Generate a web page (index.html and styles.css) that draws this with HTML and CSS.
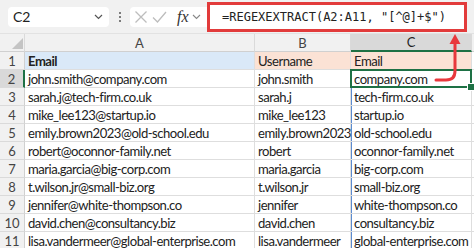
FILE: index.html
```html
<!DOCTYPE html>
<html>
<head>
<meta charset="utf-8">
<link rel="stylesheet" href="styles.css">
</head>
<body>
<div class="app">
  <div class="toolbar">
    <div class="namebox">
      <span class="ref">C2</span>
      <svg class="chev" width="9" height="6" viewBox="0 0 9 6"><path d="M1 1 L4.5 4.5 L8 1" fill="none" stroke="#555" stroke-width="1.2"/></svg>
    </div>
    <div class="dots"><span></span><span></span><span></span></div>
    <div class="fnbox">
      <svg width="14" height="14" viewBox="0 0 14 14"><path d="M1.5 1.5 L12.5 12.5 M12.5 1.5 L1.5 12.5" stroke="#bdbdbd" stroke-width="1.3" fill="none"/></svg>
      <svg width="15" height="14" viewBox="0 0 15 14"><path d="M1 7.5 L5.5 12 L14 2" stroke="#bdbdbd" stroke-width="1.3" fill="none"/></svg>
      <span class="fx">fx</span>
      <svg width="9" height="6" viewBox="0 0 9 6"><path d="M1 1 L4.5 4.5 L8 1" fill="none" stroke="#888" stroke-width="1.1"/></svg>
    </div>
    <div class="formula"><span class="ftext">=REGEXEXTRACT(A2:A11, "[^@]+$")</span></div>
  </div>
  <div class="sheet">
    <div class="corner"><svg width="25" height="18" viewBox="0 0 25 18"><polygon points="12,15 23,15 23,4" fill="#c4c4c4"/></svg></div>
    <div class="colh">A</div>
    <div class="colh">B</div>
    <div class="colh selh">C</div>
    <div class="colh last"></div>

    <div class="rowh">1</div>
    <div class="cell hdA">Email</div>
    <div class="cell hdB">Username</div>
    <div class="cell hdB">Email</div>
    <div class="cell last"></div>

    <div class="rowh selr">2</div>
    <div class="cell">john.smith@company.com</div>
    <div class="cell">john.smith</div>
    <div class="cell selc">company.com</div>
    <div class="cell last"></div>

    <div class="rowh">3</div>
    <div class="cell">sarah.j@tech-firm.co.uk</div>
    <div class="cell">sarah.j</div>
    <div class="cell spill">tech-firm.co.uk</div>
    <div class="cell last"></div>

    <div class="rowh">4</div>
    <div class="cell">mike_lee123@startup.io</div>
    <div class="cell">mike_lee123</div>
    <div class="cell spill">startup.io</div>
    <div class="cell last"></div>

    <div class="rowh">5</div>
    <div class="cell">emily.brown2023@old-school.edu</div>
    <div class="cell">emily.brown2023</div>
    <div class="cell spill">old-school.edu</div>
    <div class="cell last"></div>

    <div class="rowh">6</div>
    <div class="cell">robert@oconnor-family.net</div>
    <div class="cell">robert</div>
    <div class="cell spill">oconnor-family.net</div>
    <div class="cell last"></div>

    <div class="rowh">7</div>
    <div class="cell">maria.garcia@big-corp.com</div>
    <div class="cell">maria.garcia</div>
    <div class="cell spill">big-corp.com</div>
    <div class="cell last"></div>

    <div class="rowh">8</div>
    <div class="cell">t.wilson.jr@small-biz.org</div>
    <div class="cell">t.wilson.jr</div>
    <div class="cell spill">small-biz.org</div>
    <div class="cell last"></div>

    <div class="rowh">9</div>
    <div class="cell">jennifer@white-thompson.co</div>
    <div class="cell">jennifer</div>
    <div class="cell spill">white-thompson.co</div>
    <div class="cell last"></div>

    <div class="rowh">10</div>
    <div class="cell">david.chen@consultancy.biz</div>
    <div class="cell">david.chen</div>
    <div class="cell spill">consultancy.biz</div>
    <div class="cell last"></div>

    <div class="rowh">11</div>
    <div class="cell">lisa.vandermeer@global-enterprise.com</div>
    <div class="cell">lisa.vandermeer</div>
    <div class="cell spill">global-enterprise.com</div>
    <div class="cell last"></div>
  </div>
  <svg class="arrow" width="474" height="248" viewBox="0 0 474 248">
    <path d="M436 80 H446 Q455 80 455 71 V42" fill="none" stroke="#e8383d" stroke-width="3" stroke-linecap="round"/>
    <polygon points="455,34 449.5,44 460.5,44" fill="#e8383d"/>
  </svg>
</div>
</body>
</html>
```

FILE: styles.css
```css
* { box-sizing: border-box; }
html, body { margin: 0; padding: 0; }
body {
  width: 474px;
  height: 248px;
  overflow: hidden;
  background: #fff;
  font-family: "Lato", "Liberation Sans", sans-serif;
}
.app { position: relative; width: 474px; height: 248px; overflow: hidden; }

.toolbar {
  height: 34px;
  background: #f1f1f1;
  display: flex;
  align-items: center;
  padding-left: 8px;
  border-bottom: 1px solid #e2e2e2;
}
.namebox {
  width: 101px;
  height: 20px;
  background: #fff;
  border-radius: 4px;
  display: flex;
  align-items: center;
  justify-content: space-between;
  padding: 0 6px 0 5px;
  font-size: 14px;
  color: #222;
}
.dots {
  width: 21px;
  display: flex;
  flex-direction: column;
  align-items: center;
  gap: 2px;
}
.dots span { width: 2px; height: 2px; background: #555; border-radius: 1px; }
.fnbox {
  width: 77px;
  height: 20px;
  background: #fff;
  border-radius: 4px 0 0 4px;
  display: flex;
  align-items: center;
  padding-left: 4px;
  gap: 4px;
}
.fx {
  font-family: "Liberation Serif", serif;
  font-style: italic;
  font-size: 16px;
  color: #333;
  margin-left: 6px;
  margin-right: -1px;
}
.formula {
  width: 260px;
  height: 30px;
  border: 3px solid #e23b3b;
  background: #fff;
  display: flex;
  align-items: center;
  padding-left: 12px;
}
.ftext {
  font-family: "DejaVu Sans Mono", monospace;
  font-size: 12px;
  color: #222;
  white-space: pre;
}

.sheet {
  display: grid;
  grid-template-columns: 25px 230px 96px 121px 10px;
  grid-auto-rows: 18px;
  font-size: 13.1px;
  letter-spacing: -0.5px;
  word-spacing: 0;
  color: #222;
}
.corner, .colh {
  background: #f1f1f1;
  border-right: 1px solid #dadada;
  border-bottom: 1px solid #d0d0d0;
}
.colh {
  display: flex;
  align-items: center;
  justify-content: center;
  color: #444;
  font-size: 13px;
  letter-spacing: 0;
}
.colh.selh {
  background: #d9d9d9;
  border-bottom: 2px solid #1e7145;
  color: #1f1f1f;
}
.rowh {
  background: #f1f1f1;
  border-right: 1px solid #d0d0d0;
  border-bottom: 1px solid #dadada;
  display: flex;
  align-items: center;
  justify-content: center;
  color: #444;
  font-size: 13px;
  letter-spacing: 0;
}
.rowh.selr {
  background: #d9d9d9;
  border-right: 2px solid #1e7145;
}
.cell {
  border-right: 1px solid #dedede;
  border-bottom: 1px solid #dedede;
  padding-left: 3px;
  padding-top: 1px;
  display: flex;
  align-items: center;
  white-space: nowrap;
}
.cell.hdA { background: #dae9f8; font-weight: bold; }
.cell.hdB { background: #fbe2d5; }
.cell.spill { box-shadow: inset 1px 0 0 #5b8bd0; }
.cell.selc { position: relative; }
.cell.selc::after {
  content: "";
  position: absolute;
  left: -1px; top: -1px; right: -1px; bottom: -1px;
  border: 2px solid #1e7145;
}
.cell.selc::before {
  content: "";
  position: absolute;
  right: -4px; bottom: -4px;
  width: 6px; height: 6px;
  background: #1e7145;
  border: 1px solid #fff;
  z-index: 2;
}
.arrow { position: absolute; left: 0; top: 0; pointer-events: none; }
```
